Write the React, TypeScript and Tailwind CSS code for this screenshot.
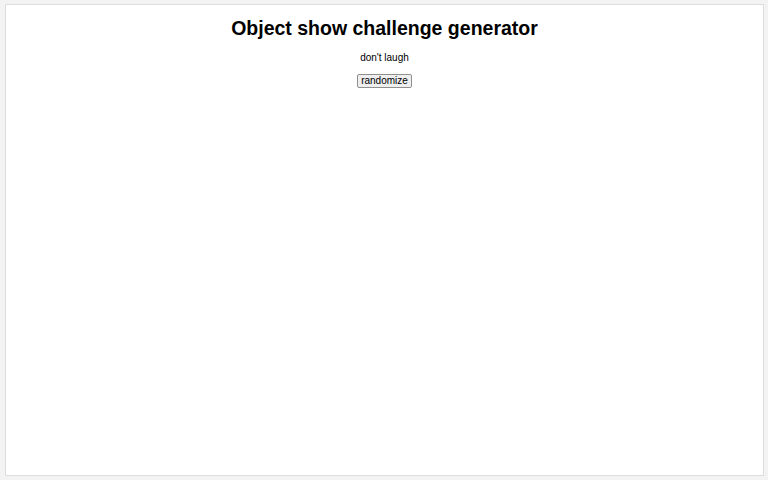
export default function App() {
  return (
    <div className="h-[480px] w-[768px] bg-[#f3f3f3] p-[4px_4px_4px_5px] font-['Liberation_Sans',Arial,sans-serif]">
      <main className="flex h-full flex-col items-center border border-[#dcdcdc] bg-white text-black">
        <h1 className="mt-[11px] text-[19.5px] font-bold leading-[24px]">
          Object show challenge generator
        </h1>
        <p className="mt-[12px] text-[10px] leading-[12px]">don&apos;t laugh</p>
        <button className="mt-[10px] rounded-[2px] border border-[#8f8f8f] bg-[#efefef] px-[3px] text-[10px] leading-[12px]">
          randomize
        </button>
      </main>
    </div>
  );
}
